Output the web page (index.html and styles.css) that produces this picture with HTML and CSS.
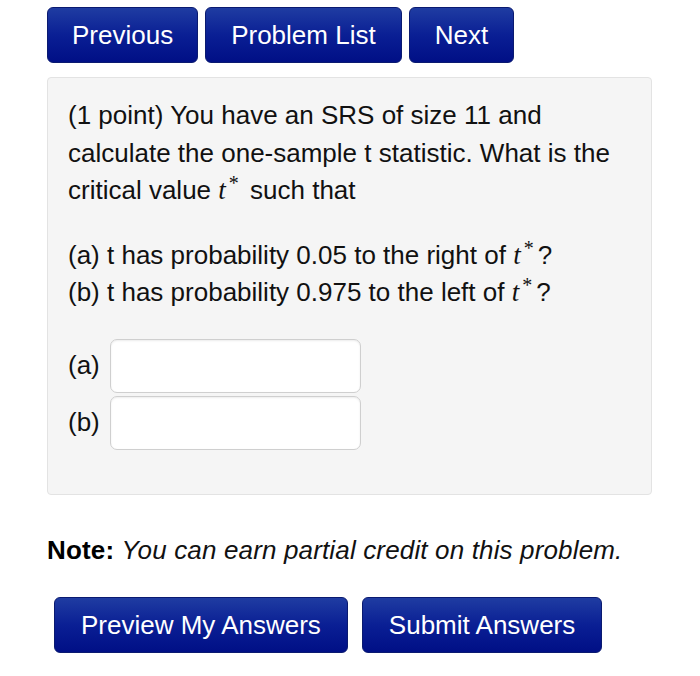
FILE: index.html
```html
<!DOCTYPE html>
<html lang="en">
<head>
  <meta charset="UTF-8">
  <title>Problem</title>
  <link rel="stylesheet" href="styles.css">
</head>
<body>
  <div class="page">
    <div class="nav">
      <a class="btn" href="#">Previous</a>
      <a class="btn" href="#">Problem List</a>
      <a class="btn" href="#">Next</a>
    </div>

    <div class="problem">
      <p>(1 point) You have an SRS of size 11 and calculate the one-sample t statistic. What is the critical value <span class="math">t<sup>*</sup></span> such that</p>
      <p>(a) t has probability 0.05 to the right of <span class="math">t<sup>*</sup></span>?<br>
      (b) t has probability 0.975 to the left of <span class="math">t<sup>*</sup></span>?</p>
      <div class="answers">
        <label class="answer">(a) <input type="text"></label>
        <label class="answer">(b) <input type="text"></label>
      </div>
    </div>

    <p class="note"><b>Note:</b> <i>You can earn partial credit on this problem.</i></p>

    <div class="submit">
      <button class="btn">Preview My Answers</button>
      <button class="btn">Submit Answers</button>
    </div>
  </div>
</body>
</html>
```

FILE: styles.css
```css
body {
  margin: 0;
  background: #fff;
  color: #111;
  font-family: "Liberation Sans", Arial, sans-serif;
  font-size: 26px;
}
.page {
  padding: 7px 48px 0 47px;
}
.nav {
  display: flex;
  gap: 7px;
}
.btn {
  display: inline-block;
  padding: 12px 25px;
  line-height: 30px;
  font-family: "Liberation Sans", Arial, sans-serif;
  font-size: 26px;
  color: #fff;
  text-decoration: none;
  background: linear-gradient(#1f3ca2, #0a1f94 50%, #000f86);
  border: 1px solid #0a1a70;
  border-radius: 6px;
}
.nav .btn:first-child {
  padding: 12px 24px;
}
.problem {
  margin-top: 14px;
  padding: 19px 20px 44px 20px;
  background: #f5f5f5;
  border: 1px solid #e3e3e3;
  border-radius: 4px;
}
.problem p {
  margin: 0 0 27px 0;
  line-height: 37.5px;
}
.math {
  font-family: "Liberation Serif", "Times New Roman", serif;
  font-style: italic;
  font-size: 27px;
  margin-right: 4px;
}
.math sup {
  display: inline-block;
  font-style: normal;
  font-size: 20px;
  line-height: 16px;
  vertical-align: 9px;
  margin-left: 3px;
}
.answers {
  display: flex;
  flex-direction: column;
  gap: 3px;
}
.answer {
  display: flex;
  align-items: center;
  gap: 10px;
}
.answer input {
  width: 251px;
  height: 54px;
  box-sizing: border-box;
  background: #fff;
  border: 1px solid #cfcfcf;
  border-radius: 7px;
  box-shadow: inset 0 1px 2px rgba(0, 0, 0, 0.08);
}
.note {
  margin: 36px 0 0 0;
  line-height: 38px;
  letter-spacing: 0.15px;
}
.note b {
  color: #000;
}
.submit {
  display: flex;
  gap: 14px;
  margin: 28px 0 0 7px;
}
.submit .btn {
  padding: 12px 26px;
}
```
